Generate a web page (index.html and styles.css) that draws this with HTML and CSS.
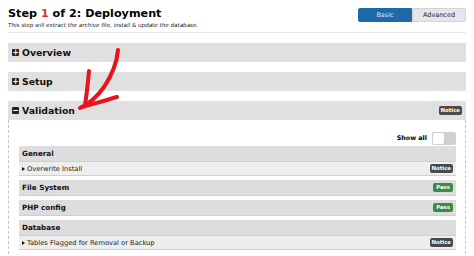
FILE: index.html
```html
<!DOCTYPE html>
<html lang="en">
<head>
    <meta charset="UTF-8">
    <title>Step 1 of 2: Deployment</title>
    <link rel="stylesheet" href="styles.css">
</head>
<body>
<div class="page">
    <div class="header">
        <div class="title-block">
            <h1>Step <span class="step-num">1</span> of 2: Deployment</h1>
            <div class="subtitle">This step will extract the archive file, install &amp; update the database.</div>
        </div>
        <div class="mode-toggle">
            <span class="mode-btn active">Basic</span>
            <span class="mode-btn">Advanced</span>
        </div>
    </div>

    <div class="section-bar"><span class="sq-icon">+</span>Overview</div>
    <div class="section-bar"><span class="sq-icon">+</span>Setup</div>
    <div class="section-bar open"><span class="sq-icon">&minus;</span>Validation<span class="badge notice">Notice</span></div>

    <div class="section-body">
        <div class="show-all">
            <span>Show all</span>
            <span class="switch"><span class="knob"></span></span>
        </div>

        <div class="panel">
            <div class="panel-head">General</div>
            <div class="panel-row"><span class="tri"></span>Overwrite Install<span class="badge notice">Notice</span></div>
        </div>
        <div class="panel">
            <div class="panel-head">File System<span class="badge pass">Pass</span></div>
        </div>
        <div class="panel">
            <div class="panel-head">PHP config<span class="badge pass">Pass</span></div>
        </div>
        <div class="panel">
            <div class="panel-head">Database</div>
            <div class="panel-row"><span class="tri"></span>Tables Flagged for Removal or Backup<span class="badge notice">Notice</span></div>
        </div>
    </div>

    <!-- hand drawn pointer -->
    <svg class="arrow" width="60" height="70" viewBox="0 0 60 70">
        <path d="M57 2 C56 14 51 27 43 39 C36 49 28 56 19 60" fill="none" stroke="#e8131b" stroke-width="4" stroke-linecap="round"/>
        <path d="M28 23 C27 34 26 45 24 57" fill="none" stroke="#e8131b" stroke-width="4" stroke-linecap="round"/>
        <path d="M56 49 C46 52 35 55 21 59" fill="none" stroke="#e8131b" stroke-width="4" stroke-linecap="round"/>
    </svg>
</div>
</body>
</html>
```

FILE: styles.css
```css
body {
    margin: 0;
    font-family: "DejaVu Sans", Verdana, sans-serif;
    background: #fff;
    color: #000;
}
.page {
    position: relative;
    width: 458px;
    padding: 0 8px;
}
.header {
    display: flex;
    justify-content: space-between;
    align-items: flex-start;
    padding-top: 6.5px;
    height: 25.5px;
    border-bottom: 1px solid #e6e6e6;
    margin-bottom: 10px;
}
h1 {
    margin: 0;
    font-size: 11.2px;
    line-height: 14px;
    font-weight: bold;
}
.step-num {
    color: #d9322f;
}
.subtitle {
    font-size: 5.6px;
    line-height: 8px;
    font-style: italic;
    color: #222;
}
.mode-toggle {
    display: flex;
    margin-top: 1.5px;
}
.mode-btn {
    width: 52px;
    height: 12px;
    line-height: 12px;
    font-size: 6.5px;
    text-align: center;
    background: #e6e6e6;
    color: #222;
    border: 1px solid #d4d4d4;
    border-radius: 0 2px 2px 0;
}
.mode-btn.active {
    background: #1e6aa8;
    color: #dce8f3;
    border-color: #1e6aa8;
    border-radius: 2px 0 0 2px;
}
.section-bar {
    display: flex;
    align-items: center;
    height: 19px;
    background: #e0e0e0;
    font-size: 9.3px;
    font-weight: bold;
    padding: 0 4px;
    margin-bottom: 10px;
    color: #111;
}
.section-bar.open {
    margin-bottom: 0;
}
.sq-icon {
    width: 7px;
    height: 7px;
    background: #222;
    color: #fff;
    font-size: 8px;
    line-height: 7px;
    text-align: center;
    border-radius: 1px;
    margin-right: 3px;
}
.badge {
    margin-left: auto;
    font-size: 5.4px;
    line-height: 9px;
    padding: 0 2px;
    border-radius: 2px;
    color: #fff;
    font-weight: bold;
}
.badge.notice {
    background: #4a4a4a;
}
.badge.pass {
    background: #3d8b40;
    padding: 0 3px;
}
.section-body {
    border-left: 1px dashed #c4c4c4;
    border-right: 1px dashed #c4c4c4;
    padding: 11px 9px 8px 10px;
    height: 120px;
}
.show-all {
    display: flex;
    justify-content: flex-end;
    align-items: center;
    font-size: 6.4px;
    font-weight: bold;
    height: 14px;
    margin-bottom: 1px;
}
.switch {
    width: 24px;
    height: 13px;
    background: #d0d0d0;
    border-radius: 2px;
    margin-left: 5px;
    display: flex;
    align-items: center;
    padding-left: 1px;
    box-sizing: border-box;
}
.knob {
    width: 11px;
    height: 11px;
    background: #fff;
    border-radius: 2px;
}
.panel {
    margin-bottom: 4px;
    border-bottom: 1px solid #cfcfcf;
}
.panel-head {
    display: flex;
    align-items: center;
    height: 15px;
    background: #dddddd;
    font-size: 7.2px;
    font-weight: bold;
    padding: 0 3px;
    color: #111;
}
.panel-row {
    display: flex;
    align-items: center;
    height: 13px;
    background: #eeeeee;
    font-size: 6.7px;
    padding: 0 3px;
    color: #222;
    border-top: 1px solid #d0d0d0;
}
.tri {
    width: 0;
    height: 0;
    border-left: 3px solid #111;
    border-top: 2.5px solid transparent;
    border-bottom: 2.5px solid transparent;
    margin-right: 2px;
}
.arrow {
    position: absolute;
    left: 61px;
    top: 48px;
}
```
